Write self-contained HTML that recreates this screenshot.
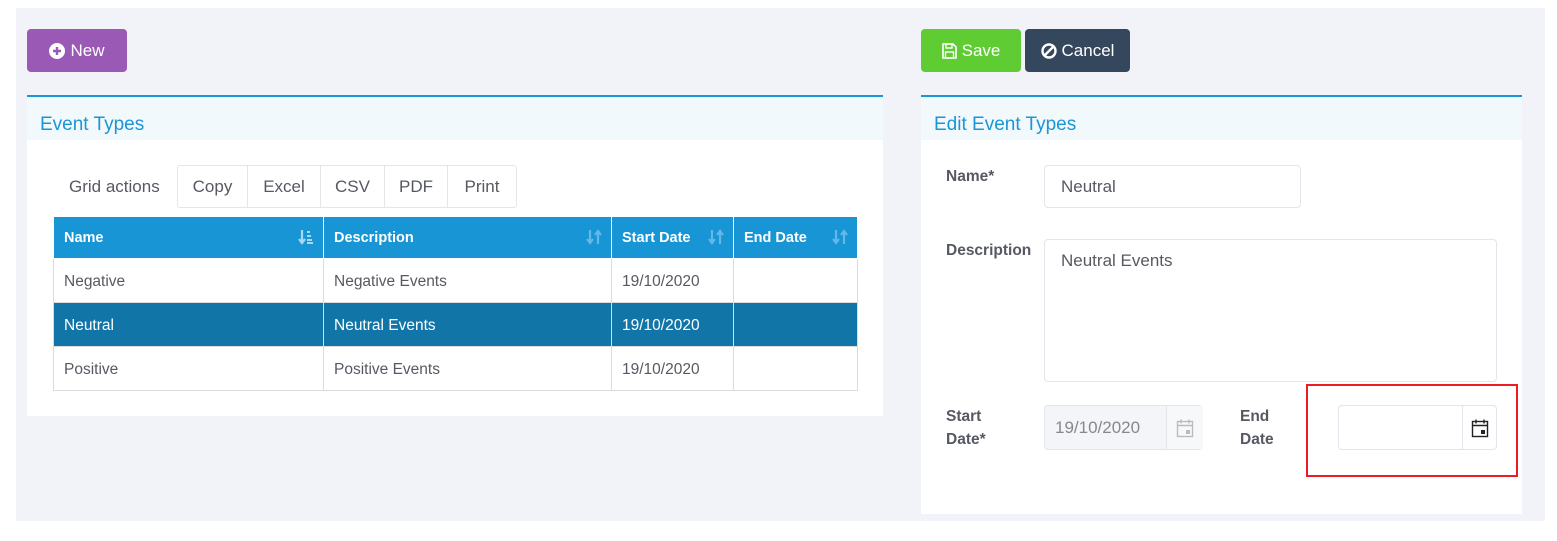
<!DOCTYPE html>
<html><head><style>
*{box-sizing:border-box;margin:0;padding:0}
body{width:1557px;height:541px;background:#fff;font-family:"Liberation Sans",sans-serif;position:relative;overflow:hidden;color:#575962}
.abs{position:absolute}
.bg{left:16px;top:8px;width:1529px;height:513px;background:#f2f3f8}
.btn{position:absolute;height:43px;border-radius:4px;color:#fff;font-size:17px;display:flex;align-items:center;justify-content:center;gap:5px}
.card{position:absolute;background:#fff;border-top:2px solid #1a95d6}
.card .hd{height:43px;background:#f2f9fd;color:#1a95d6;font-size:19px;padding:17px 0 0 13px}
.ga{position:absolute;top:165px;height:43px;border:1px solid #e6e6e6;font-size:17px;display:flex;align-items:center;justify-content:center;color:#575962}
table{position:absolute;left:53px;top:216px;border-collapse:collapse;font-size:15.5px}
td,th{border:1px solid #dcdcdc;padding:2px 10px 0;text-align:left;height:44px}
th{background:#1795d5;color:#fff;font-weight:bold;font-size:14.5px;height:42px;border-color:#fff;position:relative;padding-top:0}
th svg{position:absolute;right:9px;top:12px}
tr.sel td{background:#1275a8;color:#fff}
.lbl{position:absolute;font-size:15.5px;font-weight:bold;color:#575962;line-height:23px}
.inp{position:absolute;border:1px solid #e2e5ec;border-radius:4px;font-size:17px;color:#575962;padding-left:16px}
</style></head><body>
<div class="abs bg"></div>
<div class="btn" style="left:27px;top:29px;width:100px;background:#9b59b6"><svg width="16" height="16" viewBox="0 0 16 16"><circle cx="8" cy="8" r="8" fill="#fff"/><path d="M8 4v8M4 8h8" stroke="#9b59b6" stroke-width="2.4"/></svg>New</div>
<div class="btn" style="left:921px;top:29px;width:100px;background:#5fcc34"><svg width="15" height="16" viewBox="0 0 15 16"><path d="M1 1h10l3 3v11H1z" fill="none" stroke="#fff" stroke-width="1.6"/><rect x="4" y="1" width="6" height="4" fill="none" stroke="#fff" stroke-width="1.4"/><rect x="3.5" y="9" width="8" height="6" fill="none" stroke="#fff" stroke-width="1.4"/></svg>Save</div>
<div class="btn" style="left:1025px;top:29px;width:105px;background:#34475c"><svg width="16" height="16" viewBox="0 0 16 16"><circle cx="8" cy="8" r="6.5" fill="none" stroke="#fff" stroke-width="2.4"/><path d="M3.5 12.5l9-9" stroke="#fff" stroke-width="2.4"/></svg>Cancel</div>

<div class="card" style="left:27px;top:95px;width:856px;height:321px"><div class="hd">Event Types</div></div>
<div class="abs" style="left:69px;top:177px;font-size:17px">Grid actions</div>
<div class="ga" style="left:177px;width:71px;border-radius:3px 0 0 3px">Copy</div>
<div class="ga" style="left:247px;width:74px">Excel</div>
<div class="ga" style="left:320px;width:65px">CSV</div>
<div class="ga" style="left:384px;width:64px">PDF</div>
<div class="ga" style="left:447px;width:70px;border-radius:0 3px 3px 0">Print</div>
<table>
<tr><th style="width:270px">Name<svg width="16" height="16" viewBox="0 0 16 16"><path d="M4 1v12M1 10l3 4 3-4" fill="none" stroke="#a9d8f2" stroke-width="2.2"/><path d="M9 3h3M9 7h4M9 11h5M9 14h6" stroke="#a9d8f2" stroke-width="2"/></svg></th><th style="width:288px">Description<svg width="16" height="16" viewBox="0 0 16 16"><path d="M4 1v13M1 10l3 4 3-4M12 15V2M9 6l3-4 3 4" fill="none" stroke="#62b8e6" stroke-width="2.2"/></svg></th><th style="width:122px">Start Date<svg width="16" height="16" viewBox="0 0 16 16"><path d="M4 1v13M1 10l3 4 3-4M12 15V2M9 6l3-4 3 4" fill="none" stroke="#62b8e6" stroke-width="2.2"/></svg></th><th style="width:124px">End Date<svg width="16" height="16" viewBox="0 0 16 16"><path d="M4 1v13M1 10l3 4 3-4M12 15V2M9 6l3-4 3 4" fill="none" stroke="#62b8e6" stroke-width="2.2"/></svg></th></tr>
<tr><td>Negative</td><td>Negative Events</td><td>19/10/2020</td><td></td></tr>
<tr class="sel"><td>Neutral</td><td>Neutral Events</td><td>19/10/2020</td><td></td></tr>
<tr><td>Positive</td><td>Positive Events</td><td>19/10/2020</td><td></td></tr>
</table>

<div class="card" style="left:921px;top:95px;width:601px;height:419px"><div class="hd">Edit Event Types</div></div>
<div class="lbl" style="left:946px;top:165px">Name*</div>
<div class="inp" style="left:1044px;top:165px;width:257px;height:43px;line-height:41px">Neutral</div>
<div class="lbl" style="left:946px;top:239px">Description</div>
<div class="inp" style="left:1044px;top:239px;width:453px;height:143px;padding-top:11px">Neutral Events</div>
<div class="lbl" style="left:946px;top:405px">Start<br>Date*</div>
<div class="inp" style="left:1044px;top:405px;width:159px;height:45px;line-height:43px;background:#f4f5f8;padding-left:10px;color:#888">19/10/2020
<div class="abs" style="left:121px;top:0;width:37px;height:43px;border-left:1px solid #e2e5ec;background:#f7f8fa;display:flex;align-items:center;justify-content:center"><svg width="18" height="20" viewBox="0 0 18 20"><rect x="1.5" y="3.5" width="15" height="15" fill="none" stroke="#bbb" stroke-width="1.4"/><path d="M1.5 7.5h15M5 1.5v4M13 1.5v4" stroke="#bbb" stroke-width="1.4"/><rect x="10" y="12" width="4" height="4" fill="#bbb"/></svg></div></div>
<div class="lbl" style="left:1240px;top:405px">End<br>Date</div>
<div class="inp" style="left:1338px;top:405px;width:159px;height:45px">
<div class="abs" style="left:123px;top:0;width:35px;height:43px;border-left:1px solid #e2e5ec;display:flex;align-items:center;justify-content:center"><svg width="18" height="20" viewBox="0 0 18 20"><rect x="1.5" y="3.5" width="15" height="15" fill="none" stroke="#222" stroke-width="1.4"/><path d="M1.5 7.5h15M5 1.5v4M13 1.5v4" stroke="#222" stroke-width="1.4"/><rect x="10" y="12" width="4" height="4" fill="#222"/></svg></div></div>
<div class="abs" style="left:1306px;top:384px;width:212px;height:93px;border:2px solid #ec1c24"></div>
</body></html>
